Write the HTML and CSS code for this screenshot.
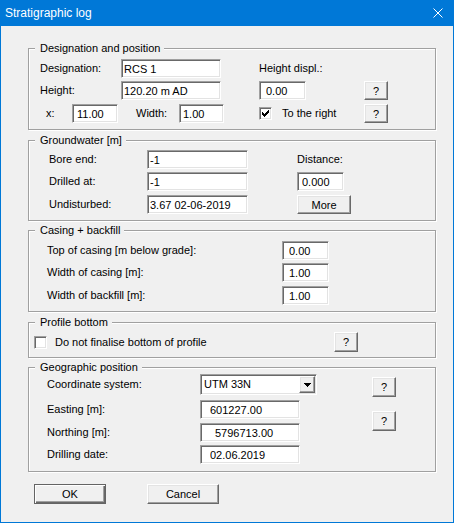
FILE: index.html
```html
<!DOCTYPE html>
<html lang="en">
<head>
<meta charset="utf-8">
<title>Stratigraphic log</title>
<link rel="stylesheet" href="styles.css">
</head>
<body>
<div class="window">
  <div class="titlebar">
    <span class="title">Stratigraphic log</span>
    <svg class="close" width="10" height="10" viewBox="0 0 10 10"><path d="M0.5 0.5L9.5 9.5M9.5 0.5L0.5 9.5" stroke="#fff" stroke-width="1" fill="none"/></svg>
  </div>
  <div class="client">
    <fieldset class="group g1">
      <legend>Designation and position</legend>
      <div class="row">
        <span class="lbl name-lbl">Designation:</span>
        <input class="edit name-edit" value="RCS 1">
        <span class="lbl displ-lbl">Height displ.:</span>
      </div>
      <div class="row">
        <span class="lbl name-lbl">Height:</span>
        <input class="edit name-edit" value="120.20 m AD">
        <input class="edit displ-edit" value="0.00">
        <button class="btn help displ-help">?</button>
      </div>
      <div class="row row-last">
        <span class="lbl x-lbl">x:</span>
        <input class="edit x-edit" value="11.00">
        <span class="lbl width-lbl">Width:</span>
        <input class="edit width-edit" value="1.00">
        <span class="check right-check"><svg width="7" height="7" viewBox="0 0 7 7" shape-rendering="crispEdges"><path d="M0 2h1v1h1v1h1v-1h1v-1h1v-1h1v-1h1v3h-1v1h-1v1h-1v1h-1v1h-1v-1h-1v-1h-1z" fill="#000"/></svg></span>
        <span class="lbl right-lbl">To the right</span>
        <button class="btn help">?</button>
      </div>
    </fieldset>

    <fieldset class="group g2">
      <legend>Groundwater [m]</legend>
      <div class="row">
        <span class="lbl gw-lbl">Bore end:</span>
        <input class="edit gw-edit" value="-1">
        <span class="lbl dist-lbl">Distance:</span>
      </div>
      <div class="row">
        <span class="lbl gw-lbl">Drilled at:</span>
        <input class="edit gw-edit" value="-1">
        <input class="edit dist-edit" value="0.000">
      </div>
      <div class="row row-last">
        <span class="lbl gw-lbl">Undisturbed:</span>
        <input class="edit gw-edit" value="3.67 02-06-2019">
        <button class="btn more">More</button>
      </div>
    </fieldset>

    <fieldset class="group g3">
      <legend>Casing + backfill</legend>
      <div class="row">
        <span class="lbl cas-lbl">Top of casing [m below grade]:</span>
        <input class="edit cas-edit" value="0.00">
      </div>
      <div class="row">
        <span class="lbl cas-lbl">Width of casing [m]:</span>
        <input class="edit cas-edit" value="1.00">
      </div>
      <div class="row row-last">
        <span class="lbl cas-lbl">Width of backfill [m]:</span>
        <input class="edit cas-edit" value="1.00">
      </div>
    </fieldset>

    <fieldset class="group g4">
      <legend>Profile bottom</legend>
      <div class="row pb-row">
        <span class="check"></span>
        <span class="lbl pb-lbl">Do not finalise bottom of profile</span>
        <button class="btn help">?</button>
      </div>
    </fieldset>

    <fieldset class="group g5">
      <legend>Geographic position</legend>
      <div class="geo">
        <div class="geo-fields">
          <div class="row geo-row1">
            <span class="lbl geo-lbl">Coordinate system:</span>
            <div class="combo">
              <span class="combo-text">UTM 33N</span>
              <span class="combo-btn"><svg width="7" height="4" viewBox="0 0 7 4" shape-rendering="crispEdges"><path d="M0 0h7v1h-1v1h-1v1h-1v1h-1v-1h-1v-1h-1v-1h-1z" fill="#000"/></svg></span>
            </div>
          </div>
          <div class="row geo-row2">
            <span class="lbl geo-lbl">Easting [m]:</span>
            <input class="edit geo-edit east" value="601227.00">
          </div>
          <div class="row geo-row3">
            <span class="lbl geo-lbl">Northing [m]:</span>
            <input class="edit geo-edit north" value="5796713.00">
          </div>
          <div class="row geo-row4">
            <span class="lbl geo-lbl">Drilling date:</span>
            <input class="edit geo-edit date" value="02.06.2019">
          </div>
        </div>
        <div class="geo-help">
          <button class="btn help geo-help1">?</button>
          <button class="btn help geo-help2">?</button>
        </div>
      </div>
    </fieldset>

    <div class="actions">
      <button class="btn dlg default">OK</button>
      <button class="btn dlg">Cancel</button>
    </div>
  </div>
</div>
</body>
</html>
```

FILE: styles.css
```css
* { box-sizing: border-box; }

html, body {
  margin: 0;
  padding: 0;
}

body {
  width: 454px;
  height: 523px;
  overflow: hidden;
  background: #f0f0f0;
  font-family: "Liberation Sans", Arial, sans-serif;
  font-size: 11px;
  color: #000;
}

.window {
  width: 454px;
  height: 523px;
  border: 1px solid #0078d7;
  border-top: none;
  background: #f0f0f0;
}

.titlebar {
  height: 26px;
  margin: 0 -1px;
  padding: 0 11px 0 5px;
  display: flex;
  align-items: center;
  background: #0078d7;
  color: #fff;
  font-size: 12px;
}

.title { flex: 1; }

.close { display: block; }

.client {
  padding: 16px 0 0 27px;
}

/* group boxes */
.group {
  width: 408px;
  min-width: 0;
  margin: 0;
  border: 1px solid #a0a0a0;
  box-shadow: inset 1px 1px 0 #fff, 1px 1px 0 #fff;
  padding: 4px 0 6px 11px;
}

.group legend {
  margin-left: -5px;
  padding: 0 4px 0 5px;
  font-size: 11px;
  line-height: 13px;
  background: #f0f0f0;
}

.g2 { margin-top: 4px; padding-top: 3px; }
.g3 { margin-top: 3px; }
.g4 { margin-top: 4px; padding: 3px 0 5px 5px; }
.g4 legend { margin-left: 1px; }
.g5 { margin-top: 3px; padding: 0 0 7px 11px; }

/* rows */
.row {
  display: flex;
  align-items: center;
  height: 19px;
}

.row + .row { margin-top: 3px; }
.row.row-last { margin-top: 4px; }

.lbl {
  display: block;
  flex: none;
  white-space: nowrap;
  line-height: 19px;
}

/* edit controls */
.edit {
  display: block;
  flex: none;
  height: 19px;
  margin: 0;
  padding: 0 0 0 2px;
  border: 1px solid;
  border-color: #a0a0a0 #fff #fff #a0a0a0;
  box-shadow: inset 1px 1px 0 #696969, inset -1px -1px 0 #e3e3e3;
  background: #fff;
  font: 11px "Liberation Sans", Arial, sans-serif;
  color: #000;
  outline: none;
}

/* buttons */
.btn {
  display: block;
  flex: none;
  height: 20px;
  margin: 0;
  padding: 0;
  background: #f0f0f0;
  border: 1px solid;
  border-color: #fff #696969 #696969 #fff;
  box-shadow: inset -1px -1px 0 #a0a0a0, inset 1px 1px 0 #e3e3e3;
  font: 11px "Liberation Sans", Arial, sans-serif;
  color: #000;
}

.help { width: 24px; }
.g1 .help { height: 19px; }

.btn.default {
  border-color: #646464;
  box-shadow: inset 1px 1px 0 #fff, inset -1px -1px 0 #696969, inset -2px -2px 0 #a0a0a0;
}

/* check boxes */
.check {
  display: flex;
  flex: none;
  align-items: center;
  justify-content: center;
  width: 13px;
  height: 13px;
  border: 1px solid;
  border-color: #a0a0a0 #fff #fff #a0a0a0;
  box-shadow: inset 1px 1px 0 #696969, inset -1px -1px 0 #e3e3e3;
  background: #fff;
}

.check svg { display: block; }

/* group 1 */
.name-lbl { width: 81px; }
.name-edit { width: 100px; }
.displ-lbl { margin-left: 38px; }
.displ-edit { width: 47px; margin-left: 38px; padding-left: 6px; }
.displ-help { margin-left: 58px; }
.x-lbl { width: 32px; padding-left: 6px; }
.x-edit { width: 46px; padding-left: 4px; }
.width-lbl { width: 61px; padding-left: 18px; }
.width-edit { width: 45px; padding-left: 3px; }
.right-check { margin-left: 35px; }
.right-lbl { width: 92px; padding-left: 10px; }

/* group 2 */
.gw-lbl { width: 107px; padding-left: 9px; }
.gw-edit { width: 101px; }
.dist-lbl { margin-left: 49px; }
.dist-edit { width: 47px; margin-left: 49px; padding-left: 4px; }
.more { width: 54px; height: 19px; margin-left: 49px; }

/* group 3 */
.cas-lbl { width: 242px; padding-left: 7px; }
.cas-edit { width: 47px; padding-left: 6px; }

/* group 4 */
.pb-row { height: 20px; }
.pb-lbl { width: 287px; padding-left: 8px; }

/* group 5 */
.geo { display: flex; }
.geo-fields { width: 277px; }
.geo-row1 { height: 21px; }
.geo-fields .geo-row2 { margin-top: 5px; }
.geo-fields .geo-row3 { margin-top: 4px; }
.geo-fields .geo-row4 { margin-top: 3px; }
.geo-lbl { width: 160px; padding-left: 7px; }
.geo-edit { width: 100px; }
.east { padding-left: 9px; }
.north { padding-left: 14px; }
.date { padding-left: 9px; }

.combo {
  display: flex;
  width: 117px;
  height: 21px;
  padding: 1px;
  border: 1px solid;
  border-color: #a0a0a0 #fff #fff #a0a0a0;
  box-shadow: inset 1px 1px 0 #696969, inset -1px -1px 0 #e3e3e3;
  background: #fff;
}

.combo-text {
  flex: 1;
  padding-left: 2px;
  line-height: 17px;
}

.combo-btn {
  display: flex;
  align-items: center;
  justify-content: center;
  width: 16px;
  height: 17px;
  background: #f0f0f0;
  border: 1px solid;
  border-color: #fff #696969 #696969 #fff;
  box-shadow: inset -1px -1px 0 #a0a0a0, inset 1px 1px 0 #e3e3e3;
}

.combo-btn svg { display: block; }

.geo-help {
  margin-left: 55px;
}

.geo-help1 { margin-top: 3px; }
.geo-help2 { margin-top: 14px; }

/* dialog buttons */
.actions {
  display: flex;
  gap: 41px;
  margin: 12px 0 0 6px;
}

.dlg { width: 72px; }
```
